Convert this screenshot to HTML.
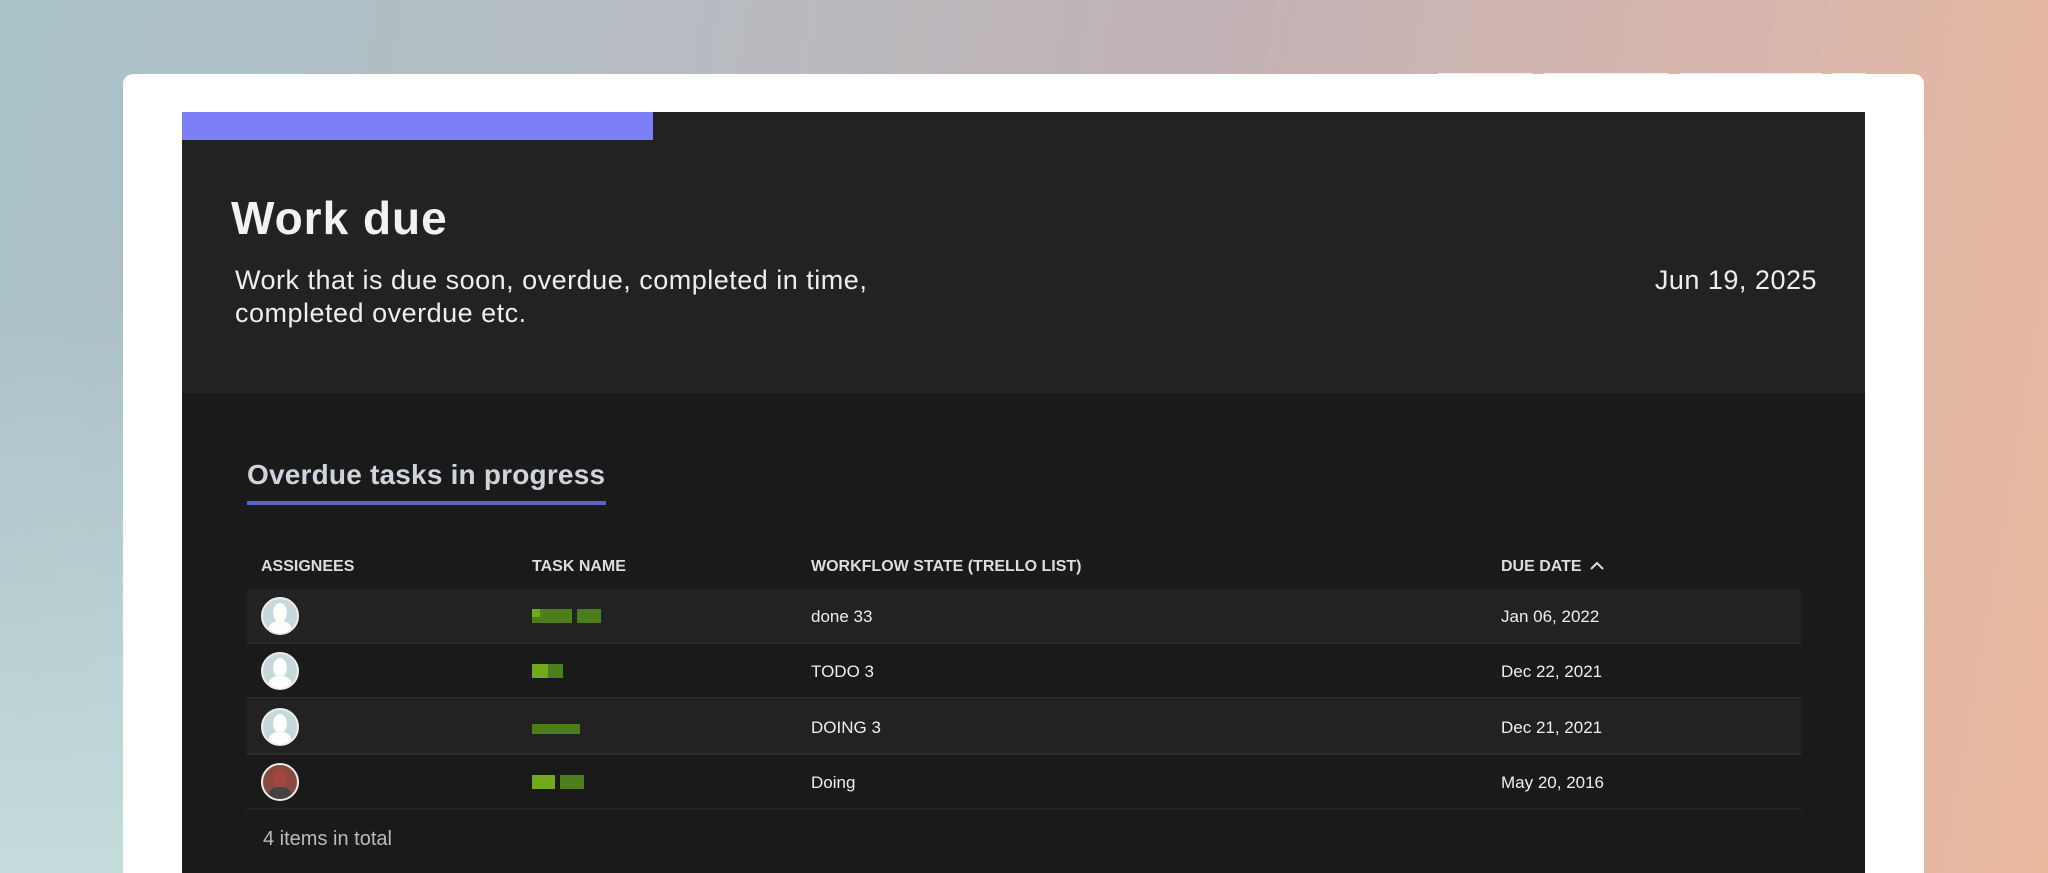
<!DOCTYPE html>
<html><head><meta charset="utf-8"><style>
*{margin:0;padding:0;box-sizing:border-box}
html{overflow:hidden;height:873px}
body{width:2048px;height:873px;overflow:hidden;font-family:"Liberation Sans",sans-serif;
background:linear-gradient(100deg,#a8c2c8 0%,#b6bcc2 30%,#c2b3b6 55%,#d8b5ac 80%,#e9b89d 100%);position:relative}
.bgl{position:absolute;left:0;top:300px;width:400px;height:573px;background:linear-gradient(180deg,rgba(196,220,220,0),#c4dcdc)}
.card{position:absolute;left:123px;top:74px;width:1801px;height:799px;background:#fff;border-radius:10px 10px 0 0}
.ghost{position:absolute;top:73px;height:5px;background:#eef0f2;border-radius:0 0 6px 6px}
.panel{position:absolute;left:182px;top:112px;width:1683px;height:761px;background:#1a1a1a}
.head{position:absolute;left:0;top:0;width:1683px;height:281px;background:#222}
.bar{position:absolute;left:0;top:0;width:471px;height:28px;background:#7b7ff5}
.title{position:absolute;left:49px;top:79px;font-size:46px;font-weight:bold;color:#f2f2f2;letter-spacing:1px}
.sub{position:absolute;left:53px;top:152px;font-size:27px;line-height:33px;color:#eee;width:720px;letter-spacing:.5px}
.date{position:absolute;right:48px;top:152px;font-size:27px;line-height:33px;color:#eee;letter-spacing:.5px}
.sec{position:absolute;left:65px;top:347px;font-size:28px;color:#cfd3dc;font-weight:bold;letter-spacing:.2px}
.ul{position:absolute;left:65px;top:389px;width:359px;height:4px;background:#5d62c8}
.th{position:absolute;top:446px;font-size:16px;font-weight:bold;color:#ddd}
.row{position:absolute;left:65px;width:1554px;height:55px;border-bottom:2px solid #2c2c2c}
.row.a{background:#222}
.av{position:absolute;left:14px;top:8px;width:38px;height:38px;border-radius:50%;background:#c6d8da;border:2px solid #eee;overflow:hidden}
.av i{position:absolute;left:10px;top:4px;width:14px;height:19px;border-radius:50%;background:#fff}
.av b{position:absolute;left:5px;top:22px;width:24px;height:16px;border-radius:10px 10px 0 0;background:#fff}
.c{position:absolute;top:18px;font-size:17px;color:#eee}
.g{position:absolute;left:285px;top:20px;height:14px;background:#4e7d1b}
.g2{position:absolute;top:20px;height:14px;background:#6faa1c}
.tot{position:absolute;left:81px;top:716px;font-size:20px;color:#bbb}
</style></head><body>
<div class="bgl"></div>
<div class="ghost" style="left:1438px;width:94px"></div>
<div class="ghost" style="left:1544px;width:124px"></div>
<div class="ghost" style="left:1680px;width:142px"></div>
<div class="ghost" style="left:1832px;width:34px"></div>
<div class="card"></div>
<div class="panel">
 <div class="head"><div class="bar"></div>
  <div class="title">Work due</div>
  <div class="sub">Work that is due soon, overdue, completed in time, completed overdue etc.</div>
  <div class="date">Jun 19, 2025</div>
 </div>
 <div class="sec">Overdue tasks in progress</div>
 <div class="ul"></div>
 <div class="th" style="left:79px">ASSIGNEES</div>
 <div class="th" style="left:350px">TASK NAME</div>
 <div class="th" style="left:629px">WORKFLOW STATE (TRELLO LIST)</div>
 <div class="th" style="left:1319px">DUE DATE &nbsp;<svg width="14" height="10" viewBox="0 0 14 10"><path d="M1 8 L7 2 L13 8" stroke="#ddd" stroke-width="2" fill="none"/></svg></div>

 <div class="row a" style="top:477px"><div class="av"><i></i><b></b></div>
  <div class="g" style="width:40px"></div><div class="g" style="left:330px;width:24px"></div><div class="g2" style="left:285px;width:8px;height:8px"></div>
  <div class="c" style="left:564px">done 33</div><div class="c" style="left:1254px">Jan 06, 2022</div></div>
 <div class="row" style="top:532px"><div class="av"><i></i><b></b></div>
  <div class="g" style="width:31px"></div><div class="g2" style="left:285px;width:16px"></div>
  <div class="c" style="left:564px">TODO 3</div><div class="c" style="left:1254px">Dec 22, 2021</div></div>
 <div class="row a" style="top:588px"><div class="av"><i></i><b></b></div>
  <div class="g" style="width:48px;top:24px;height:10px"></div>
  <div class="c" style="left:564px">DOING 3</div><div class="c" style="left:1254px">Dec 21, 2021</div></div>
 <div class="row" style="top:643px;border-bottom-color:#222"><div class="av" style="background:#8a4a40"><i style="background:#a0463c"></i><b style="background:#444"></b></div>
  <div class="g2" style="left:285px;width:23px"></div><div class="g" style="left:313px;width:24px"></div>
  <div class="c" style="left:564px">Doing</div><div class="c" style="left:1254px">May 20, 2016</div></div>
 <div class="tot">4 items in total</div>
</div>
</body></html>
